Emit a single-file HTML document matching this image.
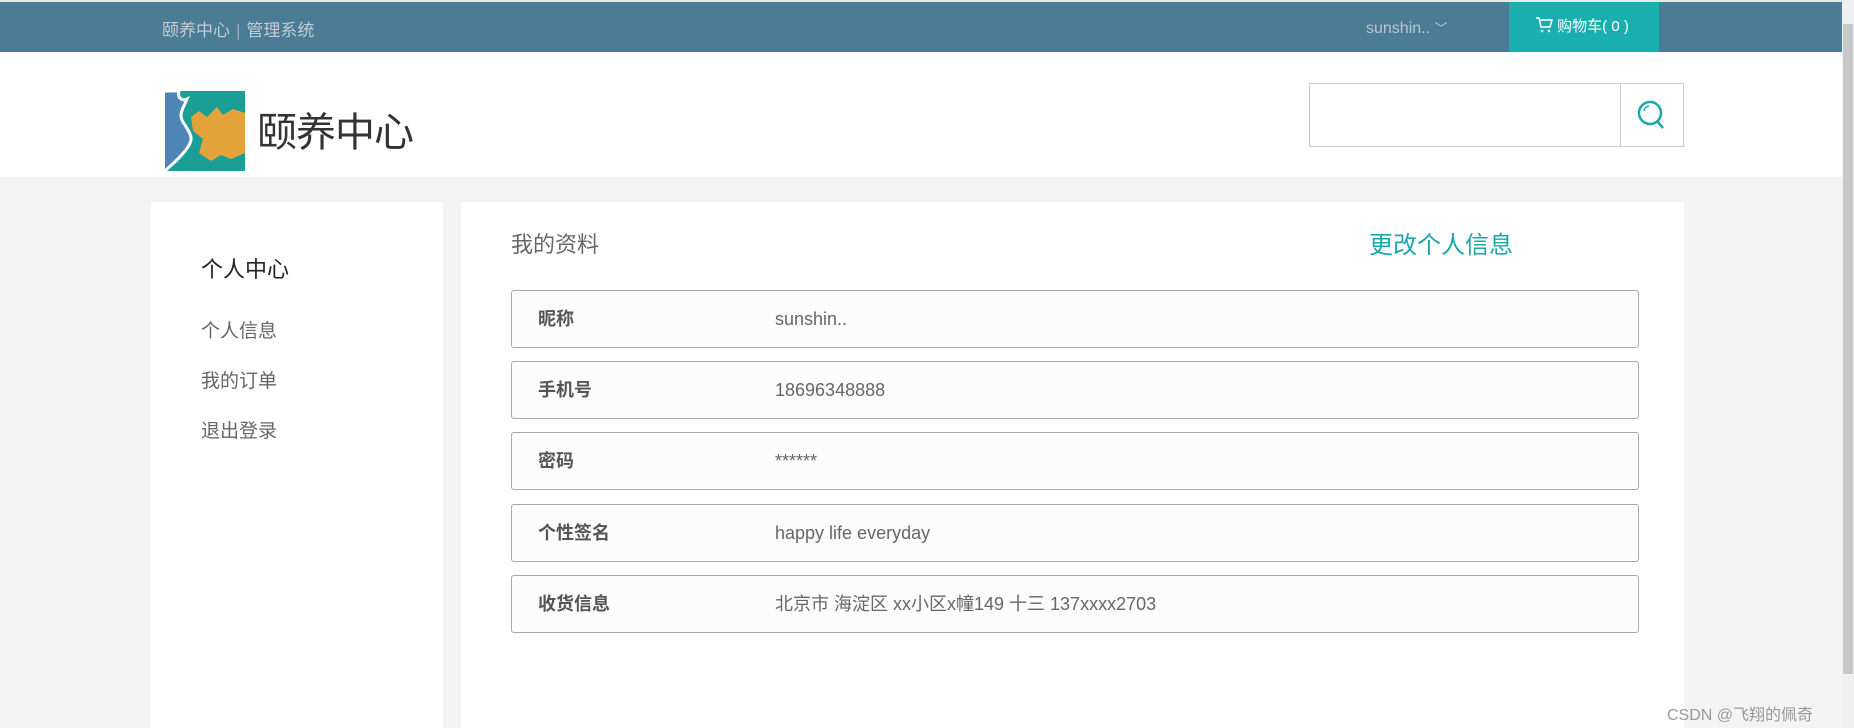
<!DOCTYPE html>
<html><head><meta charset="utf-8"><style>
*{margin:0;padding:0;box-sizing:border-box}
body{width:1854px;height:728px;overflow:hidden;background:#f4f4f4;font-family:"Liberation Sans","Noto Sans CJK SC",sans-serif;position:relative}
.abs{position:absolute}
.top{left:0;top:2px;width:1842px;height:50px;background:#4a7c95}
.hdr{left:0;top:52px;width:1842px;height:125px;background:#fff}
.row{position:absolute;left:511px;width:1128px;height:58px;border:1px solid #aaa;border-radius:3px;background:#fcfcfc;display:flex;align-items:center;font-size:18px}
.row .l{position:absolute;left:26px;top:0;line-height:56px;font-weight:bold;color:#555}
.row .v{position:absolute;left:263px;top:0;line-height:56px;color:#666}
.nav{position:absolute;left:201px;font-size:19px;color:#666}
</style></head><body>
<div class="abs" style="left:0;top:0;width:1854px;height:2px;background:#e8e8e8"></div>
<div class="abs top"></div>
<div class="abs" style="left:162px;top:16px;font-size:17px;color:#c5ccd2">颐养中心<span style="margin:0 6px;color:#aab">|</span>管理系统</div>
<div class="abs" style="left:1366px;top:18px;font-size:16px;color:#b9c6cf">sunshin.. <span style="font-size:13px">﹀</span></div>
<div class="abs" style="left:1509px;top:2px;width:150px;height:50px;background:#1aafaf;color:#fff;font-size:15px;line-height:50px;padding-left:26px">
<svg width="18" height="16" viewBox="0 0 18 16" style="vertical-align:-2px"><path d="M1 1h3l2 9h9l2-7H5" fill="none" stroke="#fff" stroke-width="1.5"/><circle cx="7" cy="14" r="1.3" fill="#fff"/><circle cx="14" cy="14" r="1.3" fill="#fff"/></svg> 购物车( 0 )</div>
<div class="abs" style="left:1842px;top:0;width:12px;height:728px;background:#f0f0f0"></div>
<div class="abs" style="left:1843px;top:24px;width:10px;height:650px;background:#c8c8c8"></div>
<div class="abs hdr"></div>
<svg class="abs" style="left:165px;top:91px" width="80" height="80" viewBox="0 0 80 80">
<rect width="80" height="80" fill="#1a9e95"/>
<path d="M0 0h14c-2 8 4 10 8 8c-4 10-10 16-2 26c6 10 10 14 0 26c-8 10-14 14-20 20z" fill="#4f86b8"/>
<path d="M26 26l8-6 8 6 10-10 6 8 10-6 12 4v40l-14 6-10-4-10 6-12-8 4-14-10-8z" fill="#e3a33a"/>
<path d="M0 0h14c-2 8 4 10 8 8c-4 10-10 16-2 26c6 10 10 14 0 26c-8 10-14 14-20 20" fill="none" stroke="#fff" stroke-width="3"/>
</svg>
<div class="abs" style="left:257px;top:100px;font-size:40px;color:#333;letter-spacing:-1px">颐养中心</div>
<div class="abs" style="left:1309px;top:83px;width:312px;height:64px;border:1px solid #ccc;background:#fff"></div>
<div class="abs" style="left:1620px;top:83px;width:64px;height:64px;border:1px solid #ccc;background:#fff"></div>
<svg class="abs" style="left:1636px;top:99px" width="32" height="32" viewBox="0 0 32 32"><circle cx="14" cy="14" r="11" fill="none" stroke="#1aa8a8" stroke-width="2.5"/><path d="M21 22l6 7" stroke="#1aa8a8" stroke-width="2.5"/><path d="M8 12a6 6 0 0 1 5-5" stroke="#1aa8a8" stroke-width="1.5" fill="none"/></svg>
<div class="abs" style="left:151px;top:202px;width:292px;height:526px;background:#fff"></div>
<div class="abs" style="left:461px;top:202px;width:1223px;height:526px;background:#fff"></div>
<div class="nav" style="top:252px;font-size:22px;color:#222">个人中心</div>
<div class="nav" style="top:316px">个人信息</div>
<div class="nav" style="top:366px">我的订单</div>
<div class="nav" style="top:416px">退出登录</div>
<div class="abs" style="left:511px;top:227px;font-size:22px;color:#666">我的资料</div>
<div class="abs" style="left:1369px;top:225px;font-size:24px;color:#1aa8a8">更改个人信息</div>
<div class="row" style="top:290px"><span class="l">昵称</span><span class="v">sunshin..</span></div>
<div class="row" style="top:361px"><span class="l">手机号</span><span class="v">18696348888</span></div>
<div class="row" style="top:432px"><span class="l">密码</span><span class="v">******</span></div>
<div class="row" style="top:504px"><span class="l">个性签名</span><span class="v">happy life everyday</span></div>
<div class="row" style="top:575px"><span class="l">收货信息</span><span class="v">北京市 海淀区 xx小区x幢149 十三 137xxxx2703</span></div>
<div class="abs" style="left:1667px;top:701px;font-size:16px;color:#999">CSDN @飞翔的佩奇</div>
</body></html>
